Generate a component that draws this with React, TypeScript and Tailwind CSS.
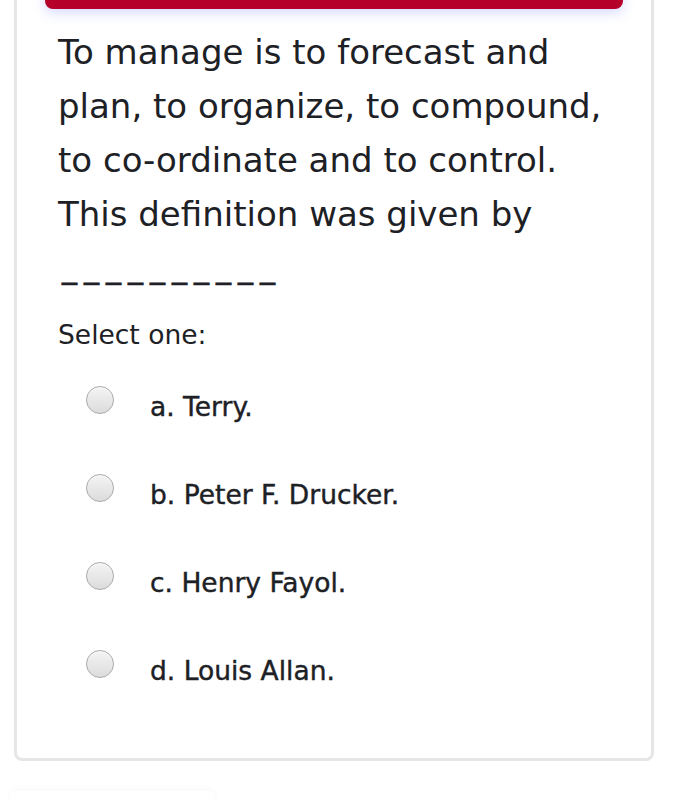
import React from 'react';

const options = ['a. Terry.', 'b. Peter F. Drucker.', 'c. Henry Fayol.', 'd. Louis Allan.'];

const Radio = () => (
  <span className="block w-[28px] h-[28px] rounded-full border-[1.5px] border-[#a9a9a9] bg-gradient-to-b from-[#f4f4f4] to-[#dcdcdc] shadow-[inset_0_1px_1px_rgba(255,255,255,0.8)]" />
);

export default function App() {
  return (
    <div className="w-[694px] h-[801px] overflow-hidden bg-white text-[#1d2125]" style={{ fontFamily: '"DejaVu Sans", "Noto Sans", sans-serif' }}>
      <div className="mx-[14px] w-[640px] -mt-[40px] border-[3px] border-[#e6e6e6] rounded-lg">
        <div className="mx-[28px] h-[46px] rounded-lg bg-[#b5002a] shadow-[0_4px_12px_rgba(90,110,255,0.25)]" />
        <div className="pl-[41px] pr-[10px] mt-[16px]">
          <p className="text-[34px] leading-[54px] whitespace-nowrap">
            To manage is to forecast and<br />
            plan, to organize, to compound,<br />
            to co-ordinate and to control.<br />
            This definition was given by
          </p>
          <p className="text-[30px] leading-[54px] tracking-[7px] pl-[4px] [-webkit-text-stroke:0.6px]">__________</p>
          <p className="mt-[22px] text-[26.5px] leading-[36px]">Select one:</p>
          <div className="mt-[10px] pb-[43px]">
            {options.map(o => (
              <div key={o} className="h-[88px] flex items-center">
                <div className="ml-[28px] w-[52px] -mt-[14px]"><Radio /></div>
                <span className="ml-[12px] text-[26.5px] leading-[36px] [-webkit-text-stroke:0.4px]">{o}</span>
              </div>
            ))}
          </div>
        </div>
      </div>
      <div className="mt-[30px] ml-[10px] w-[205px] h-[20px] rounded-md shadow-[0_-2px_6px_rgba(0,0,0,0.03)]" />
    </div>
  );
}
